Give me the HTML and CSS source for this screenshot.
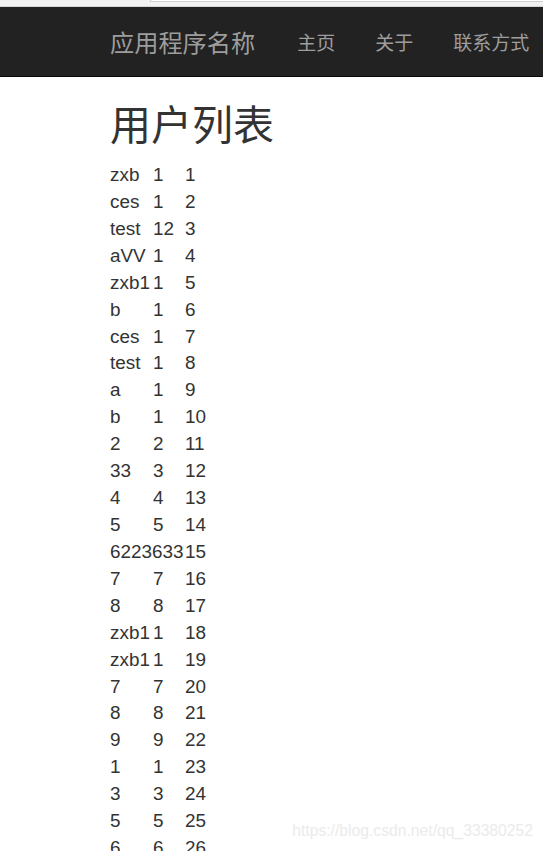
FILE: index.html
```html
<!DOCTYPE html>
<html lang="zh">
<head>
<meta charset="utf-8">
<title>用户列表</title>
<link rel="stylesheet" href="styles.css">
</head>
<body>
<div class="topstrip">
  <div class="topstrip-gap"></div>
  <div class="topstrip-box"></div>
</div>
<nav class="navbar">
  <a class="brand" href="#">应用程序名称</a>
  <ul class="nav">
    <li><a href="#">主页</a></li>
    <li><a href="#">关于</a></li>
    <li><a href="#">联系方式</a></li>
  </ul>
</nav>
<main class="content">
  <h1 class="title">用户列表</h1>
  <div class="list">
    <div class="row"><span>zxb</span><span>1</span><span>1</span></div>
    <div class="row"><span>ces</span><span>1</span><span>2</span></div>
    <div class="row"><span>test</span><span>12</span><span>3</span></div>
    <div class="row"><span>aVV</span><span>1</span><span>4</span></div>
    <div class="row"><span>zxb1</span><span>1</span><span>5</span></div>
    <div class="row"><span>b</span><span>1</span><span>6</span></div>
    <div class="row"><span>ces</span><span>1</span><span>7</span></div>
    <div class="row"><span>test</span><span>1</span><span>8</span></div>
    <div class="row"><span>a</span><span>1</span><span>9</span></div>
    <div class="row"><span>b</span><span>1</span><span>10</span></div>
    <div class="row"><span>2</span><span>2</span><span>11</span></div>
    <div class="row"><span>33</span><span>3</span><span>12</span></div>
    <div class="row"><span>4</span><span>4</span><span>13</span></div>
    <div class="row"><span>5</span><span>5</span><span>14</span></div>
    <div class="row"><span>6223633</span><span></span><span>15</span></div>
    <div class="row"><span>7</span><span>7</span><span>16</span></div>
    <div class="row"><span>8</span><span>8</span><span>17</span></div>
    <div class="row"><span>zxb1</span><span>1</span><span>18</span></div>
    <div class="row"><span>zxb1</span><span>1</span><span>19</span></div>
    <div class="row"><span>7</span><span>7</span><span>20</span></div>
    <div class="row"><span>8</span><span>8</span><span>21</span></div>
    <div class="row"><span>9</span><span>9</span><span>22</span></div>
    <div class="row"><span>1</span><span>1</span><span>23</span></div>
    <div class="row"><span>3</span><span>3</span><span>24</span></div>
    <div class="row"><span>5</span><span>5</span><span>25</span></div>
    <div class="row"><span>6</span><span>6</span><span>26</span></div>
  </div>
</main>
<div class="watermark">https://blog.csdn.net/qq_33380252</div>
</body>
</html>
```
FILE: styles.css
```css
html, body {
  margin: 0;
  padding: 0;
  background: #fff;
}
body {
  font-family: "Liberation Sans", "Noto Sans CJK SC", sans-serif;
  color: #333;
}
.topstrip {
  display: flex;
  height: 6px;
  background: #f1f1f1;
  border-bottom: 1px solid #d6d6d6;
}
.topstrip-gap {
  width: 150px;
}
.topstrip-box {
  flex: 1;
  height: 1px;
  background: #fff;
  border-left: 1px solid #cfcfcf;
  border-bottom: 1px solid #cfcfcf;
}
.navbar {
  display: flex;
  align-items: center;
  height: 70px;
  box-sizing: border-box;
  padding-left: 110px;
  padding-bottom: 1px;
  background: #222;
  border-bottom: 1px solid #080808;
  white-space: nowrap;
  overflow: hidden;
}
.brand {
  font-family: "Noto Sans CJK SC", sans-serif;
  font-size: 24.2px;
  color: #9d9d9d;
  text-decoration: none;
  margin-right: 42px;
}
.nav {
  display: flex;
  gap: 40px;
  list-style: none;
  margin: 0;
  padding: 0;
}
.nav a {
  font-family: "Noto Sans CJK SC", sans-serif;
  font-size: 19px;
  color: #9d9d9d;
  text-decoration: none;
}
.content {
  padding-left: 110px;
}
.title {
  font-family: "Noto Sans CJK SC", sans-serif;
  font-weight: normal;
  font-size: 41px;
  line-height: 46px;
  margin: 22px 0 17px;
  color: #333;
}
.row {
  display: grid;
  grid-template-columns: 43px 32px auto;
  font-size: 18.9px;
  line-height: 26.92px;
  white-space: nowrap;
}
.watermark {
  position: absolute;
  top: 822px;
  right: 10px;
  font-family: "Liberation Sans", sans-serif;
  font-size: 15.7px;
  color: #ebebeb;
}
```
